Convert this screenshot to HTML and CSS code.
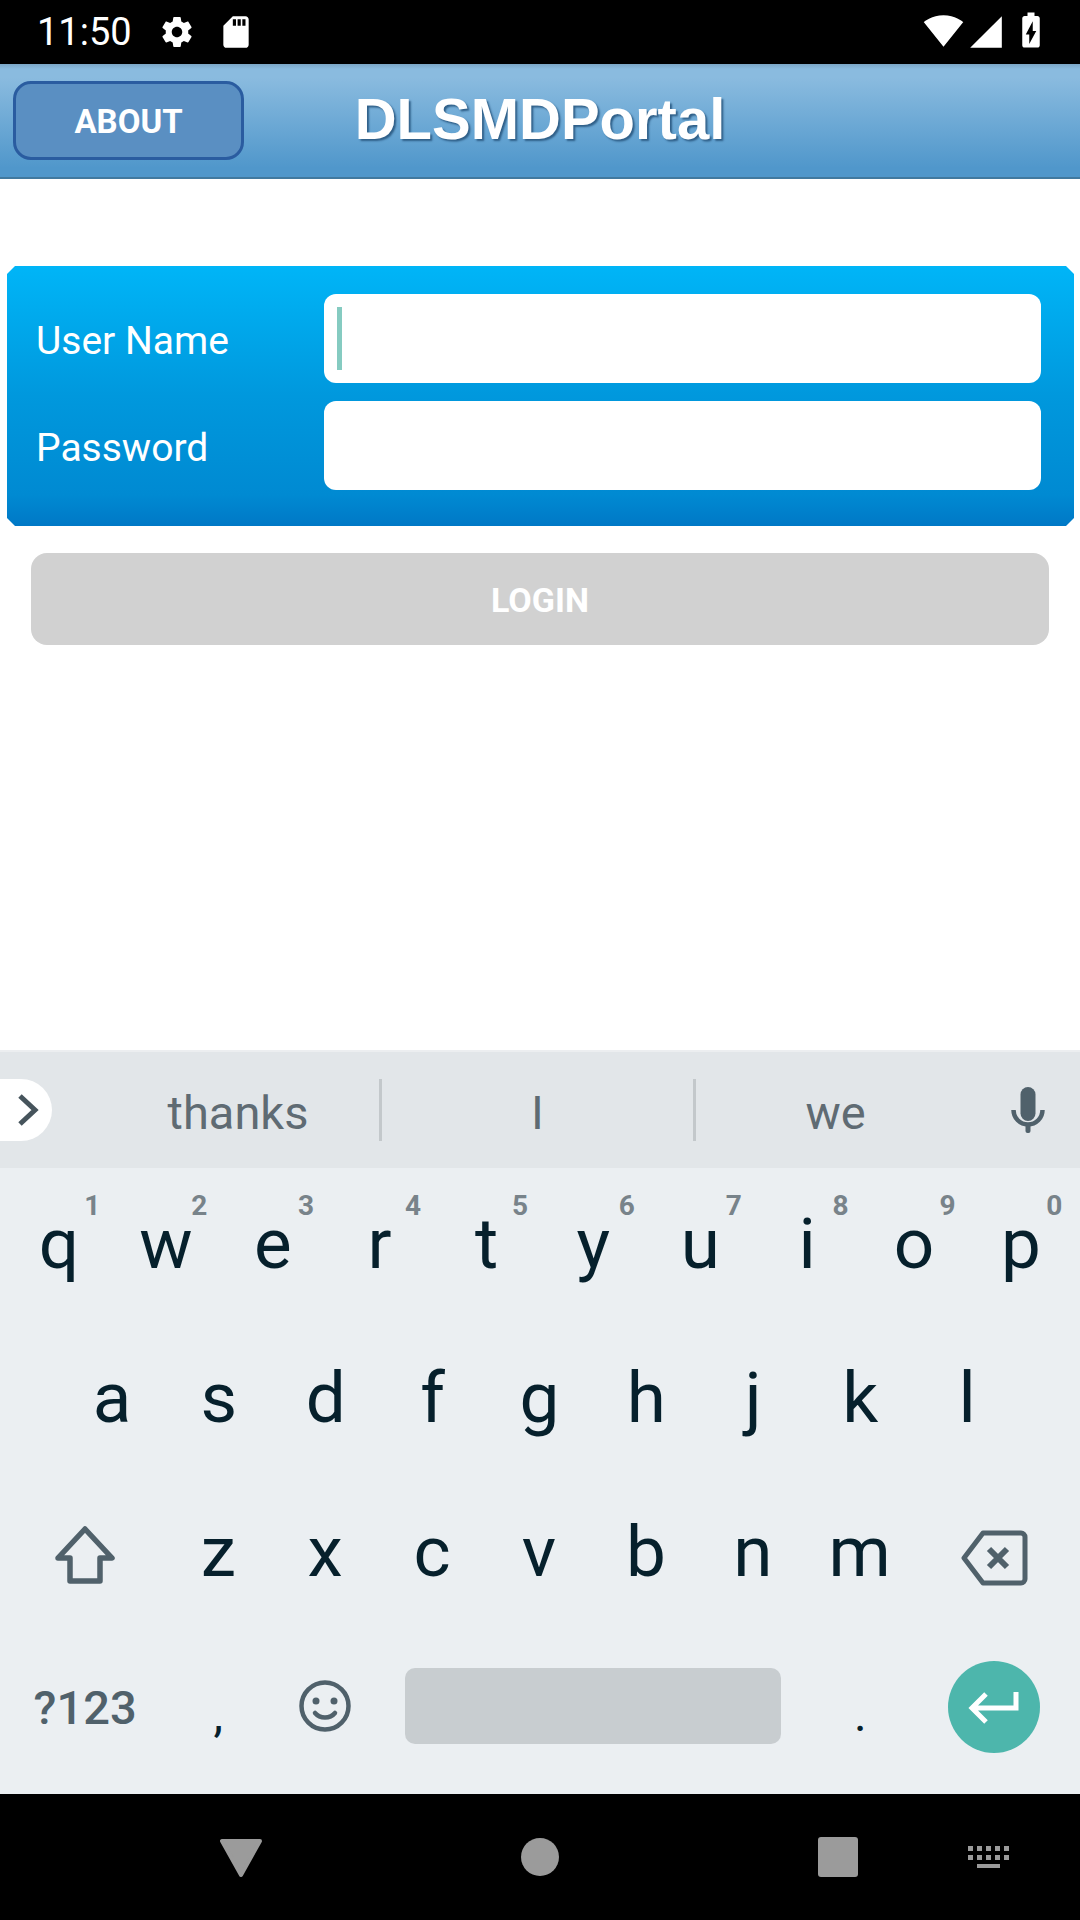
FILE: index.html
```html
<!DOCTYPE html>
<html lang="en">
<head>
<meta charset="UTF-8">
<meta name="viewport" content="width=device-width, initial-scale=1.0">
<title>DLSMDPortal</title>
<link rel="stylesheet" href="styles.css">
</head>
<body>

<div class="status-bar">
    <span class="time">11:50</span>
    <svg class="ic-gear" viewBox="0 0 24 24"><path d="M19.43 12.98c.04-.32.07-.64.07-.98s-.03-.66-.07-.98l2.11-1.65c.19-.15.24-.42.12-.64l-2-3.46c-.12-.22-.39-.3-.61-.22l-2.49 1c-.52-.4-1.08-.73-1.69-.98l-.38-2.65C14.46 2.18 14.25 2 14 2h-4c-.25 0-.46.18-.49.42l-.38 2.65c-.61.25-1.17.59-1.69.98l-2.49-1c-.23-.09-.49 0-.61.22l-2 3.46c-.13.22-.07.49.12.64l2.11 1.65c-.04.32-.07.65-.07.98s.03.66.07.98l-2.11 1.65c-.19.15-.24.42-.12.64l2 3.46c.12.22.39.3.61.22l2.49-1c.52.4 1.08.73 1.69.98l.38 2.65c.03.24.24.42.49.42h4c.25 0 .46-.18.49-.42l.38-2.65c.61-.25 1.17-.59 1.69-.98l2.49 1c.23.09.49 0 .61-.22l2-3.46c.12-.22.07-.49-.12-.64l-2.11-1.65zM12 15.5c-1.93 0-3.5-1.57-3.5-3.5s1.57-3.5 3.5-3.5 3.5 1.57 3.5 3.5-1.57 3.5-3.5 3.5z"></path></svg>
    <svg class="ic-sd" viewBox="0 0 24 24"><path d="M18 2h-8L4.02 8 4 20c0 1.1.9 2 2 2h12c1.1 0 2-.9 2-2V4c0-1.1-.9-2-2-2zm-6 6h-2V4h2v4zm3 0h-2V4h2v4zm3 0h-2V4h2v4z"></path></svg>
    <svg class="ic-wifi" viewBox="0 0 24 24"><path d="M12 21.5 23.6 7C23.2 6.7 18.7 3 12 3 5.3 3 .8 6.7.4 7z"></path></svg>
    <svg class="ic-signal" viewBox="0 0 24 24"><path d="M2 22h20V2z"></path></svg>
    <svg class="ic-battery" viewBox="0 0 24 24"><path d="M15.67 4H14V2h-4v2H8.33C7.6 4 7 4.6 7 5.33v15.33C7 21.4 7.6 22 8.33 22h7.33c.74 0 1.34-.6 1.34-1.33V5.33C17 4.6 16.4 4 15.67 4zM11 20v-5.5H9L13 7v5.5h2L11 20z"></path></svg>
</div>

<div class="header">
    <button class="about-btn">ABOUT</button>
    <h1 class="title">DLSMDPortal</h1>
</div>

<div class="content">
    <div class="login-card">
        <label class="field-label">User Name</label>
        <div class="field"><span class="caret"></span></div>
        <label class="field-label">Password</label>
        <div class="field"></div>
    </div>
    <button class="login-btn">LOGIN</button>
</div>

<div class="keyboard">
    <div class="suggestions">
        <div class="sugg-arrow">
            <svg class="ic-chevron" viewBox="0 0 24 36"><path d="M5 4 20 18 5 32"></path></svg>
        </div>
        <div class="sugg sugg-first">thanks</div>
        <div class="sugg sugg-mid">I</div>
        <div class="sugg sugg-last">we</div>
        <svg class="ic-mic" viewBox="0 0 40 50">
            <rect x="12.5" y="2" width="15" height="34" rx="7.5"></rect>
            <path class="mic-arc" d="M5.5 25a14.5 14.5 0 0 0 29 0"></path>
            <rect x="17.5" y="38" width="5" height="10" rx="2"></rect>
        </svg>
    </div>

    <div class="keys">
        <div class="row">
            <div class="key">q<sup class="num">1</sup></div>
            <div class="key">w<sup class="num">2</sup></div>
            <div class="key">e<sup class="num">3</sup></div>
            <div class="key">r<sup class="num">4</sup></div>
            <div class="key">t<sup class="num">5</sup></div>
            <div class="key">y<sup class="num">6</sup></div>
            <div class="key">u<sup class="num">7</sup></div>
            <div class="key">i<sup class="num">8</sup></div>
            <div class="key">o<sup class="num">9</sup></div>
            <div class="key">p<sup class="num">0</sup></div>
        </div>
        <div class="row row-home">
            <div class="key">a</div>
            <div class="key">s</div>
            <div class="key">d</div>
            <div class="key">f</div>
            <div class="key">g</div>
            <div class="key">h</div>
            <div class="key">j</div>
            <div class="key">k</div>
            <div class="key">l</div>
        </div>
        <div class="row">
            <div class="key key-shift">
                <svg class="ic-shift" viewBox="0 0 64 62"><path d="M32 5 59 34H47V57H17V34H5z"></path></svg>
            </div>
            <div class="key">z</div>
            <div class="key">x</div>
            <div class="key">c</div>
            <div class="key">v</div>
            <div class="key">b</div>
            <div class="key">n</div>
            <div class="key">m</div>
            <div class="key key-del">
                <svg class="ic-delete" viewBox="0 0 70 58">
                    <path d="M24 4H62a4 4 0 0 1 4 4V50a4 4 0 0 1-4 4H24L5 29z"></path>
                    <path class="del-x" d="M30 20 48 38M48 20 30 38"></path>
                </svg>
            </div>
        </div>
        <div class="row">
            <div class="key key-shift key-sym">?123</div>
            <div class="key key-punct">,</div>
            <div class="key">
                <svg class="ic-emoji" viewBox="0 0 54 54">
                    <circle class="face" cx="27" cy="27" r="23.5"></circle>
                    <circle cx="18" cy="22" r="3.5"></circle>
                    <circle cx="36" cy="22" r="3.5"></circle>
                    <path class="face" d="M17 34c5 6 15 6 20 0"></path>
                </svg>
            </div>
            <div class="key key-space"><div class="spacebar"></div></div>
            <div class="key key-punct">.</div>
            <div class="key key-del">
                <div class="enter">
                    <svg class="ic-enter" viewBox="0 0 54 36"><path d="M49 3V19H6M19 5 5 19 19 33"></path></svg>
                </div>
            </div>
        </div>
    </div>
</div>

<div class="nav-bar">
    <svg class="ic-back" viewBox="0 0 46 42"><path d="M4 4H42L23 38z"></path></svg>
    <div class="nav-home"></div>
    <div class="nav-recent"></div>
    <svg class="ic-kbd" viewBox="0 0 42 24">
        <rect x="0" y="1" width="5" height="5"></rect>
        <rect x="9" y="1" width="5" height="5"></rect>
        <rect x="18" y="1" width="5" height="5"></rect>
        <rect x="27" y="1" width="5" height="5"></rect>
        <rect x="36" y="1" width="5" height="5"></rect>
        <rect x="0" y="10" width="5" height="5"></rect>
        <rect x="9" y="10" width="5" height="5"></rect>
        <rect x="18" y="10" width="5" height="5"></rect>
        <rect x="27" y="10" width="5" height="5"></rect>
        <rect x="36" y="10" width="5" height="5"></rect>
        <rect x="9" y="19" width="23" height="4"></rect>
    </svg>
</div>

</body>
</html>
```

FILE: styles.css
```css
* {
  box-sizing: border-box;
}
body {
  margin: 0;
  width: 1080px;
  height: 1920px;
  display: flex;
  flex-direction: column;
  overflow: hidden;
  background-color: #fff;
  font-family: Roboto, "Noto Sans", sans-serif;
}

/* status bar */
.status-bar {
  height: 64px;
  flex-shrink: 0;
  display: flex;
  align-items: center;
  padding: 0 28px 0 37px;
  background-color: #000;
  color: #fff;
}
.status-bar svg {
  fill: #fff;
}
.time {
  font-size: 38px;
  width: 93px;
}
.ic-gear {
  width: 36px;
  height: 36px;
  margin-left: 29px;
}
.ic-sd {
  width: 38px;
  height: 38px;
  margin-left: 22px;
}
.ic-wifi {
  width: 41px;
  height: 41px;
  margin-left: auto;
  margin-top: -4px;
}
.ic-signal {
  width: 38px;
  height: 38px;
  margin-left: 3px;
  margin-top: -1px;
}
.ic-battery {
  width: 42px;
  height: 42px;
  margin-left: 5px;
  margin-top: -4px;
}

/* header */
.header {
  height: 115px;
  flex-shrink: 0;
  display: grid;
  grid-template-columns: 1fr auto 1fr;
  align-items: center;
  padding: 0 13px;
  background: linear-gradient(#7ba6c6 0, #8abbdf 5px, #8abbdf 12%, #5097cb 92%);
  border-bottom: 2px solid #41799f;
}
.about-btn {
  width: 231px;
  height: 79px;
  padding: 2px 0 0;
  border: 3px solid #2a5ca0;
  border-radius: 18px;
  background-color: #5a8fc2;
  color: #fff;
  font-family: Roboto, sans-serif;
  font-size: 33px;
  font-weight: 700;
}
.title {
  margin: 0;
  padding-bottom: 4px;
  font-family: "Liberation Sans", Arial, sans-serif;
  font-size: 58px;
  font-weight: 700;
  color: #fff;
  text-shadow: 2px 2px 2px #2f5f88;
}

/* login form */
.content {
  flex: 1;
  padding-top: 87px;
}
.login-card {
  width: 1067px;
  height: 260px;
  margin-left: 7px;
  padding: 28px 33px 0 29px;
  display: grid;
  grid-template-columns: 288px 1fr;
  grid-auto-rows: 89px;
  row-gap: 18px;
  align-items: center;
  clip-path: polygon(8px 0, calc(100% - 8px) 0, 100% 8px, 100% calc(100% - 8px), calc(100% - 8px) 100%, 8px 100%, 0 calc(100% - 8px), 0 8px);
  background: linear-gradient(#00b5f7, #0098dd 50%, #008ad2 88%, #0078c6);
}
.field-label {
  padding-top: 4px;
  font-size: 39px;
  color: #fff;
}
.field {
  height: 89px;
  padding: 13px 0 0 13px;
  border-radius: 12px;
  background-color: #fff;
}
.caret {
  display: block;
  width: 5px;
  height: 63px;
  background-color: #85cbc1;
}
.login-btn {
  display: block;
  width: 1018px;
  height: 92px;
  margin: 27px 0 0 31px;
  padding: 2px 0 0;
  border: 0;
  border-radius: 16px;
  background-color: #d1d1d1;
  color: #fff;
  font-family: Roboto, sans-serif;
  font-size: 34px;
  font-weight: 700;
}

/* keyboard */
.keyboard {
  flex-shrink: 0;
  background-color: #ebeff2;
}
.suggestions {
  height: 118px;
  display: flex;
  align-items: center;
  border-top: 2px solid #eceef0;
  background-color: #e2e6e9;
  font-size: 47px;
  color: #5f6b73;
}
.sugg-arrow {
  width: 52px;
  height: 62px;
  margin-right: 45px;
  padding-left: 15px;
  display: flex;
  align-items: center;
  border-radius: 0 31px 31px 0;
  background-color: #fff;
}
.ic-chevron {
  width: 24px;
  height: 36px;
  fill: none;
  stroke: #46545c;
  stroke-width: 5;
}
.sugg {
  height: 62px;
  padding-top: 4px;
  display: flex;
  align-items: center;
  justify-content: center;
}
.sugg-first {
  width: 285px;
  border-right: 3px solid #c3c8cb;
}
.sugg-mid {
  width: 314px;
  border-right: 3px solid #c3c8cb;
}
.sugg-last {
  width: 279px;
}
.ic-mic {
  width: 40px;
  height: 50px;
  margin-left: 33px;
  fill: #50616b;
}
.mic-arc {
  fill: none;
  stroke: #50616b;
  stroke-width: 4.5;
}

.keys {
  padding-bottom: 10px;
}
.row {
  height: 154px;
  display: flex;
  padding: 0 5.5px;
}
.row-home {
  padding-left: 58.5px;
}
.key {
  position: relative;
  width: 106.9px;
  display: flex;
  align-items: center;
  justify-content: center;
  padding-bottom: 3px;
  font-size: 71px;
  color: #06202c;
}
.num {
  position: absolute;
  top: 24px;
  right: 12px;
  font-size: 28px;
  font-weight: 700;
  line-height: 1;
  color: #78838a;
}
.key-shift {
  width: 159.4px;
  padding-bottom: 0;
}
.key-del {
  width: 161px;
  padding-bottom: 0;
}
.key-sym {
  font-size: 47px;
  font-weight: 500;
  color: #50616b;
}
.key-punct {
  font-size: 48px;
  padding-top: 18px;
}
.key-space {
  width: 429px;
}
.spacebar {
  width: 376px;
  height: 76px;
  border-radius: 10px;
  background-color: #c8cdd0;
}
.enter {
  width: 92px;
  height: 92px;
  display: flex;
  align-items: center;
  justify-content: center;
  border-radius: 50%;
  background-color: #4db6ac;
}
.ic-shift {
  width: 64px;
  height: 62px;
  margin-top: 4px;
  fill: none;
  stroke: #50616b;
  stroke-width: 5.5;
  stroke-linejoin: round;
}
.ic-delete {
  width: 70px;
  height: 58px;
  margin-top: 10px;
  fill: none;
  stroke: #50616b;
  stroke-width: 5;
  stroke-linejoin: round;
}
.del-x {
  stroke-width: 6;
}
.ic-emoji {
  width: 54px;
  height: 54px;
  fill: #50616b;
}
.face {
  fill: none;
  stroke: #50616b;
  stroke-width: 4.5;
  stroke-linecap: round;
}
.ic-enter {
  width: 54px;
  height: 36px;
  fill: none;
  stroke: #fff;
  stroke-width: 5;
}

/* bottom nav */
.nav-bar {
  height: 126px;
  flex-shrink: 0;
  display: flex;
  align-items: center;
  padding-left: 218px;
  background-color: #000;
}
.ic-back {
  width: 46px;
  height: 42px;
  margin-top: 2px;
  fill: #9b9b9b;
  stroke: #9b9b9b;
  stroke-width: 4;
  stroke-linejoin: round;
}
.nav-home {
  width: 38px;
  height: 38px;
  margin-left: 257px;
  border-radius: 50%;
  background-color: #9b9b9b;
}
.nav-recent {
  width: 40px;
  height: 40px;
  margin-left: 259px;
  border-radius: 3px;
  background-color: #9b9b9b;
}
.ic-kbd {
  width: 42px;
  height: 24px;
  margin-left: 110px;
  fill: #9b9b9b;
}
```
